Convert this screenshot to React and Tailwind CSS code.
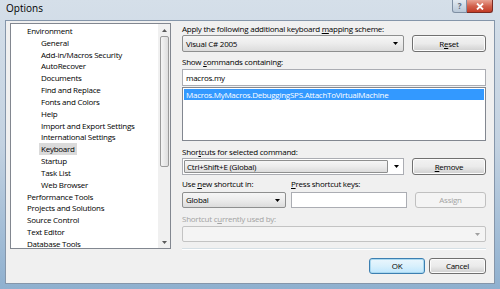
import React from "react";

const font = { fontFamily: '"Open Sans", "Noto Sans", sans-serif' };

function Combo({ text, className = "", disabled = false }) {
  return (
    <div
      className={`flex items-stretch rounded-[2px] border ${
        disabled ? "border-[#c3c3c3] bg-[#f4f4f4]" : "border-[#8e8f8f] bg-gradient-to-b from-[#f6f6f6] via-[#ececec] to-[#dcdcdc]"
      } ${className}`}
    >
      <div className="flex flex-1 items-center pl-[3px] text-[8px] leading-none text-black">{text}</div>
      <div className="flex w-[15px] items-center justify-center">
        <svg width="5" height="3" viewBox="0 0 5 3">
          <path d="M0 0h5L2.5 3z" fill={disabled ? "#a0a0a0" : "#000"} />
        </svg>
      </div>
    </div>
  );
}

function Btn({ children, className = "", disabled = false, def = false }) {
  return (
    <div
      className={`flex items-center justify-center rounded-[3px] border text-[8px] leading-none ${
        disabled
          ? "border-[#c0c0c0] bg-[#f4f4f4] text-[#a3a3a3]"
          : def
          ? "border-[#3c7fb1] bg-gradient-to-b from-[#eaf6fd] via-[#d9f0fc] to-[#bee6fd] text-black shadow-[inset_0_0_0_1px_#a8d8f0]"
          : "border-[#707070] bg-gradient-to-b from-[#f2f2f2] via-[#ebebeb] to-[#cfcfcf] text-black shadow-[inset_0_0_0_1px_#fcfcfc]"
      } ${className}`}
    >
      {children}
    </div>
  );
}

const tree = [
  ["Environment", 0],
  ["General", 1],
  ["Add-in/Macros Security", 1],
  ["AutoRecover", 1],
  ["Documents", 1],
  ["Find and Replace", 1],
  ["Fonts and Colors", 1],
  ["Help", 1],
  ["Import and Export Settings", 1],
  ["International Settings", 1],
  ["Keyboard", 1, true],
  ["Startup", 1],
  ["Task List", 1],
  ["Web Browser", 1],
  ["Performance Tools", 0],
  ["Projects and Solutions", 0],
  ["Source Control", 0],
  ["Text Editor", 0],
  ["Database Tools", 0],
];

export default function App() {
  return (
    <div
      className="flex h-[289px] w-[500px] flex-col overflow-hidden bg-gradient-to-b from-[#d5dfe9] via-[#c3d2e1] to-[#8fb0cf] tracking-[-0.25px]"
      style={font}
    >
      {/* title bar */}
      <div className="flex h-[20px] items-start justify-between">
        <div className="pl-[6px] pt-[3px] text-[10px] leading-none tracking-normal text-black">Options</div>
        <div className="mr-[7px] flex">
          <div className="flex h-[13px] w-[15px] items-center justify-center rounded-bl-[3px] border border-t-0 border-[#7f8fa3] bg-gradient-to-b from-[#e4ebf2] to-[#b9c8d8] text-[8px] font-bold leading-none text-[#5a6a7c]">
            ?
          </div>
          <div className="flex h-[13px] w-[26px] items-center justify-center rounded-br-[3px] border border-l-0 border-t-0 border-[#7a2a22] bg-gradient-to-b from-[#e8a393] via-[#d2624e] to-[#c23a24]">
            <svg width="8" height="7" viewBox="0 0 8 7">
              <path d="M1 0.5L7 6.5M7 0.5L1 6.5" stroke="#fff" strokeWidth="1.8" />
            </svg>
          </div>
        </div>
      </div>

      {/* client */}
      <div className="mx-[5px] flex h-[264px] border border-[#8596aa] bg-[#f0f0f0]">
        {/* tree */}
        <div className="ml-[4px] mt-[2px] flex h-[226px] w-[161px] overflow-hidden border border-[#828790] bg-white">
          <div className="flex-1 pl-[1px] pt-[1px]">
            {tree.map(([t, lvl, sel]) => (
              <div key={t} className="flex h-[11.83px] items-center text-[8px] leading-none text-black">
                <span
                  className={sel ? "bg-[#dadada] px-[2px] py-[2px]" : ""}
                  style={{ marginLeft: sel ? 27 : lvl ? 29 : 15 }}
                >
                  {t}
                </span>
              </div>
            ))}
          </div>
          <div className="flex w-[12px] flex-col items-center bg-[#f0f0f0]">
            <div className="flex h-[12px] items-center justify-center">
              <svg width="5" height="3" viewBox="0 0 5 3">
                <path d="M0 3h5L2.5 0z" fill="#5a5a5a" />
              </svg>
            </div>
            <div className="h-[131px] w-[9px] rounded-[2px] border border-[#9a9a9a] bg-gradient-to-r from-[#f5f5f5] to-[#dedede]" />
            <div className="flex-1" />
            <div className="flex h-[12px] items-center justify-center">
              <svg width="5" height="3" viewBox="0 0 5 3">
                <path d="M0 0h5L2.5 3z" fill="#5a5a5a" />
              </svg>
            </div>
          </div>
        </div>

        {/* right column */}
        <div className="ml-[11px] flex w-[304px] flex-col">
          <div className="mt-[3px] flex h-[10px] items-center text-[8px] leading-none text-black">
            <span>
              Apply the following additional keyboard <u>m</u>apping scheme:
            </span>
          </div>
          <div className="mt-[1px] flex h-[17px] gap-[8px]">
            <Combo text="Visual C# 2005" className="w-[222px]" />
            <Btn className="flex-1">
              <span>
                R<u>e</u>set
              </span>
            </Btn>
          </div>
          <div className="mt-[5px] flex h-[10px] items-center text-[8px] leading-none text-black">
            <span>
              Show <u>c</u>ommands containing:
            </span>
          </div>
          <div className="mt-[2px] flex h-[17px] items-center border border-[#abadb3] bg-white pl-[3px] text-[8px] leading-none text-black">
            macros.my
          </div>
          <div className="mt-[1px] h-[54px] border border-[#828790] bg-white p-[1px]">
            <div className="flex h-[11px] items-center bg-[#3399ff] pl-[2px] text-[8px] leading-none text-white">
              Macros.MyMacros.DebuggingSPS.AttachToVirtualMachine
            </div>
          </div>
          <div className="mt-[6px] flex h-[10px] items-center text-[8px] leading-none text-black">
            <span>
              Shor<u>t</u>cuts for selected command:
            </span>
          </div>
          <div className="mt-[1px] flex h-[17px] gap-[8px]">
            <div className="flex w-[222px] items-stretch border border-[#abadb3] bg-white">
              <div className="m-[1px] flex flex-1 items-center rounded-[1px] border border-[#8e8f8f] bg-gradient-to-b from-[#f6f6f6] via-[#ececec] to-[#dcdcdc] pl-[2px] text-[8px] leading-none text-black">
                Ctrl+Shift+E (Global)
              </div>
              <div className="flex w-[14px] items-center justify-center">
                <svg width="5" height="3" viewBox="0 0 5 3">
                  <path d="M0 0h5L2.5 3z" fill="#000" />
                </svg>
              </div>
            </div>
            <Btn className="flex-1">
              <span>
                <u>R</u>emove
              </span>
            </Btn>
          </div>
          <div className="mt-[4px] flex h-[10px] items-center text-[8px] leading-none text-black">
            <div className="w-[109px]">
              Use <u>n</u>ew shortcut in:
            </div>
            <div>
              <u>P</u>ress shortcut keys:
            </div>
          </div>
          <div className="mt-[3px] flex h-[16px]">
            <Combo text="Global" className="w-[104px]" />
            <div className="ml-[5px] w-[116px] border border-[#abadb3] bg-white" />
            <Btn disabled className="ml-[8px] flex-1">
              Assign
            </Btn>
          </div>
          <div className="mt-[6px] flex h-[10px] items-center text-[8px] leading-none text-[#a3a3a3]">
            <span>
              Shortcut c<u>u</u>rrently used by:
            </span>
          </div>
          <div className="mt-[2px] h-[16px]">
            <Combo text="" disabled className="h-full" />
          </div>
          <div className="mt-[6px] h-[1px] bg-[#d5dfe5] shadow-[0_1px_0_#fff]" />
          <div className="mt-[9px] flex h-[16px] justify-end gap-[4px]">
            <Btn def className="w-[56px]">
              OK
            </Btn>
            <Btn className="w-[57px]">Cancel</Btn>
          </div>
        </div>
      </div>
    </div>
  );
}
